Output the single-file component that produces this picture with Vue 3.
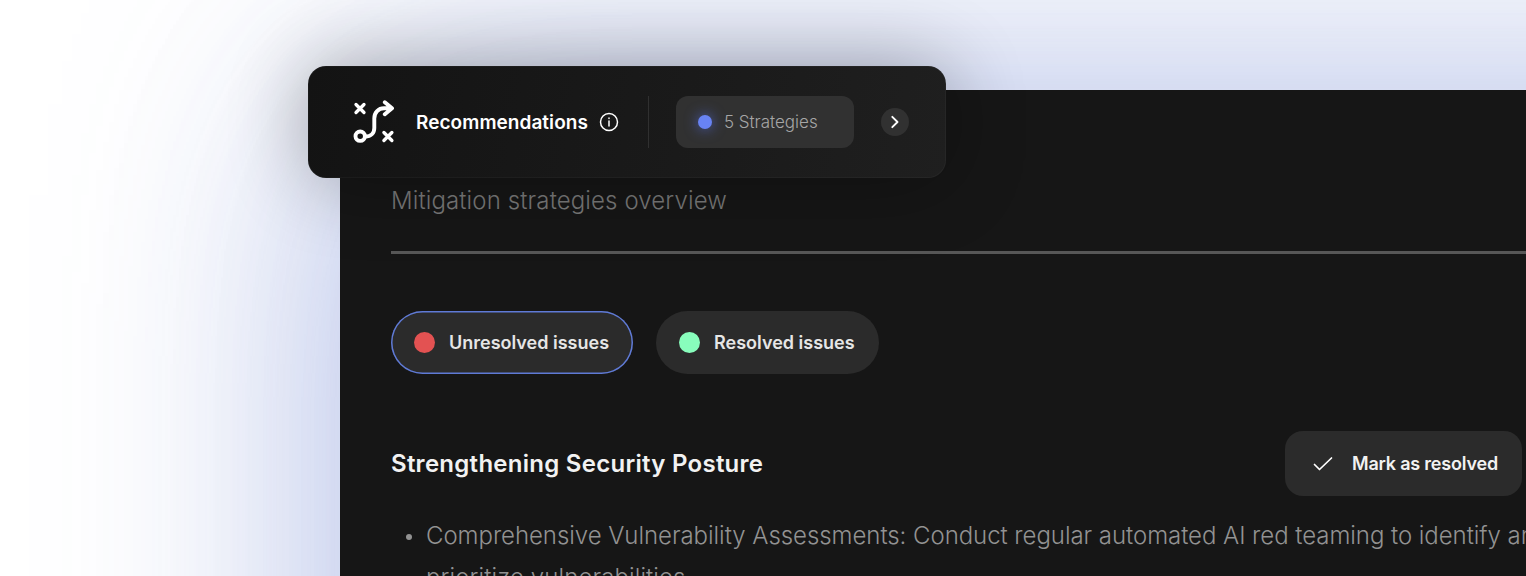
<template>
  <div class="scene">
    <section class="panel">
      <p class="subtitle">Mitigation strategies overview</p>
      <div class="filters">
        <button
          v-for="filter in filters"
          :key="filter.id"
          class="filter"
          :class="[filter.id, { active: filter.id === activeFilter }]"
          @click="activeFilter = filter.id"
        >
          <i class="status"></i>
          <span>{{ filter.label }}</span>
        </button>
      </div>
      <div class="issue-head">
        <h2>Strengthening Security Posture</h2>
        <button class="resolve">
          <svg width="22" height="18" viewBox="0 0 22 18">
            <path d="M2.5 9.5l5 5L19.5 3" />
          </svg>
          <span>Mark as resolved</span>
        </button>
      </div>
      <ul class="strategies">
        <li>
          Comprehensive Vulnerability Assessments: Conduct regular automated AI red teaming to identify and<br />
          <span class="second-line">prioritize vulnerabilities.</span>
        </li>
      </ul>
    </section>

    <header class="card">
      <svg class="route" width="42" height="44" viewBox="0 0 42 44">
        <path class="cross" d="M3 4.5l8 8M11 4.5l-8 8M30.9 32.5l8 8M38.9 32.5l-8 8" />
        <circle cx="7.2" cy="36.2" r="4.7" />
        <path d="M12.3 36.6C18 36.6 21.3 33 21.3 28V18.5C21.3 12.5 25.5 8.3 31 8.3H38.5M31.8 2.3L39 8.3L31.8 14.3" />
      </svg>
      <h1>Recommendations</h1>
      <svg class="info" width="20" height="20" viewBox="0 0 20 20">
        <circle cx="10" cy="10" r="8.5" />
        <path d="M10 9v5M10 6v.4" />
      </svg>
      <div class="divider"></div>
      <div class="count">
        <i class="pulse"></i>
        <span>5 Strategies</span>
      </div>
      <button class="next">
        <svg width="10" height="14" viewBox="0 0 10 14">
          <path d="M2.3 1.8L7.5 7L2.3 12.2" />
        </svg>
      </button>
    </header>
  </div>
</template>

<script setup>
import { ref } from 'vue';

const activeFilter = ref('unresolved');
const filters = [
  { id: 'unresolved', label: 'Unresolved issues' },
  { id: 'resolved', label: 'Resolved issues' },
];
</script>

<style>
body {
  background: #fff;
  overflow: hidden;
}
</style>

<style scoped>
.scene {
  position: relative;
  box-sizing: border-box;
  height: 576px;
  padding: 90px 0 0 340px;
  overflow: hidden;
  font-family: Inter, "Noto Sans", sans-serif;
}

button {
  border: 0;
  font: inherit;
  color: inherit;
}

h1,
h2,
p,
ul {
  margin: 0;
  padding: 0;
}

svg {
  flex: none;
  fill: none;
  stroke: #fff;
  stroke-linecap: round;
  stroke-linejoin: round;
}

.panel {
  box-sizing: border-box;
  width: 1500px; /* Runs off the right edge together with its glow */
  height: 1000px;
  padding: 93px 0 0 51px;
  background: #161616;
  box-shadow: 0 15px 300px rgba(96, 122, 222, 0.45), 0 0 280px rgba(90, 110, 130, 0.11);
}

.subtitle {
  height: 68px;
  border-bottom: 3px solid #575757;
  color: #787878;
  font-size: 24px;
  font-weight: 300;
  letter-spacing: 0.12px;
  line-height: 36px;
}

.filters {
  display: flex;
  gap: 23px;
  margin-top: 57px;
}

.filter {
  display: flex;
  align-items: center;
  box-sizing: border-box;
  height: 63px;
  padding: 0 24px 0 23px;
  border-radius: 32px;
  background: #2b2b2b;
  color: #e6e6e6;
  font-size: 18px;
  font-weight: 600;
}

.filter.active {
  box-shadow: inset 0 0 0 1.5px #5f7ad6;
}

.status {
  width: 21px;
  height: 21px;
  margin-right: 14px;
  border-radius: 50%;
  background: #e35252;
}

.resolved .status {
  background: #88fdbc;
}

.issue-head {
  display: flex;
  justify-content: space-between;
  align-items: center;
  width: 1131px;
  margin-top: 57px;
}

h2 {
  color: #f2f2f2;
  font-size: 24px;
  font-weight: 600;
  letter-spacing: 0.27px;
}

.resolve {
  display: flex;
  align-items: center;
  gap: 18px;
  width: 237px;
  height: 65px;
  padding: 0 0 0 27px;
  border-radius: 18px;
  background: #2b2b2b;
  color: #f2f2f2;
  font-size: 18px;
  font-weight: 600;
  letter-spacing: -0.2px;
  white-space: nowrap;
}

.resolve svg {
  stroke-width: 1.7;
}

.strategies {
  margin-top: 19px;
  padding-left: 35px;
  color: #929292;
  font-size: 24px;
  font-weight: 300;
  letter-spacing: -0.05px;
  line-height: 42px;
  list-style: none;
  white-space: nowrap;
}

.strategies li {
  position: relative;
}

.strategies li::before {
  position: absolute;
  top: 19px;
  left: -20px;
  width: 6px;
  height: 6px;
  border-radius: 50%;
  background: #929292;
  content: "";
}

.second-line {
  letter-spacing: 0.1px;
}

.card {
  position: absolute;
  top: 66px;
  left: 308px;
  display: flex;
  align-items: center;
  box-sizing: border-box;
  width: 638px;
  height: 112px;
  padding-left: 45px;
  border-radius: 18px;
  background: linear-gradient(100deg, #131313, #1f1f1f);
  box-shadow: 0 0 80px rgba(0, 0, 0, 0.32), inset 0 0 0 1px rgba(255, 255, 255, 0.03);
}

.route {
  margin-top: -1px;
  stroke-width: 3.9;
}

.route .cross {
  stroke-width: 3.3;
}

h1 {
  margin-left: 21px;
  color: #fff;
  font-size: 19px;
  font-weight: 600;
  letter-spacing: 0.05px;
}

.info {
  margin-left: 11px;
  stroke-width: 1.5;
}

.divider {
  width: 1px;
  height: 52px;
  margin-left: 29px;
  background: #303030;
}

.count {
  display: flex;
  align-items: center;
  box-sizing: border-box;
  width: 178px;
  height: 52px;
  margin-left: 27px;
  padding-left: 22px;
  border-radius: 12px;
  background: #313131;
  color: #a6a6a6;
  font-size: 17px;
  font-weight: 300;
}

.pulse {
  width: 14px;
  height: 14px;
  margin-right: 12px;
  border-radius: 50%;
  background: #6883f3;
  box-shadow: 0 0 14px rgba(88, 116, 240, 0.75);
}

.next {
  display: flex;
  align-items: center;
  justify-content: center;
  width: 28px;
  height: 28px;
  margin-left: 27px;
  padding: 0;
  border-radius: 50%;
  background: #313131;
}

.next svg {
  stroke-width: 1.9;
}
</style>
